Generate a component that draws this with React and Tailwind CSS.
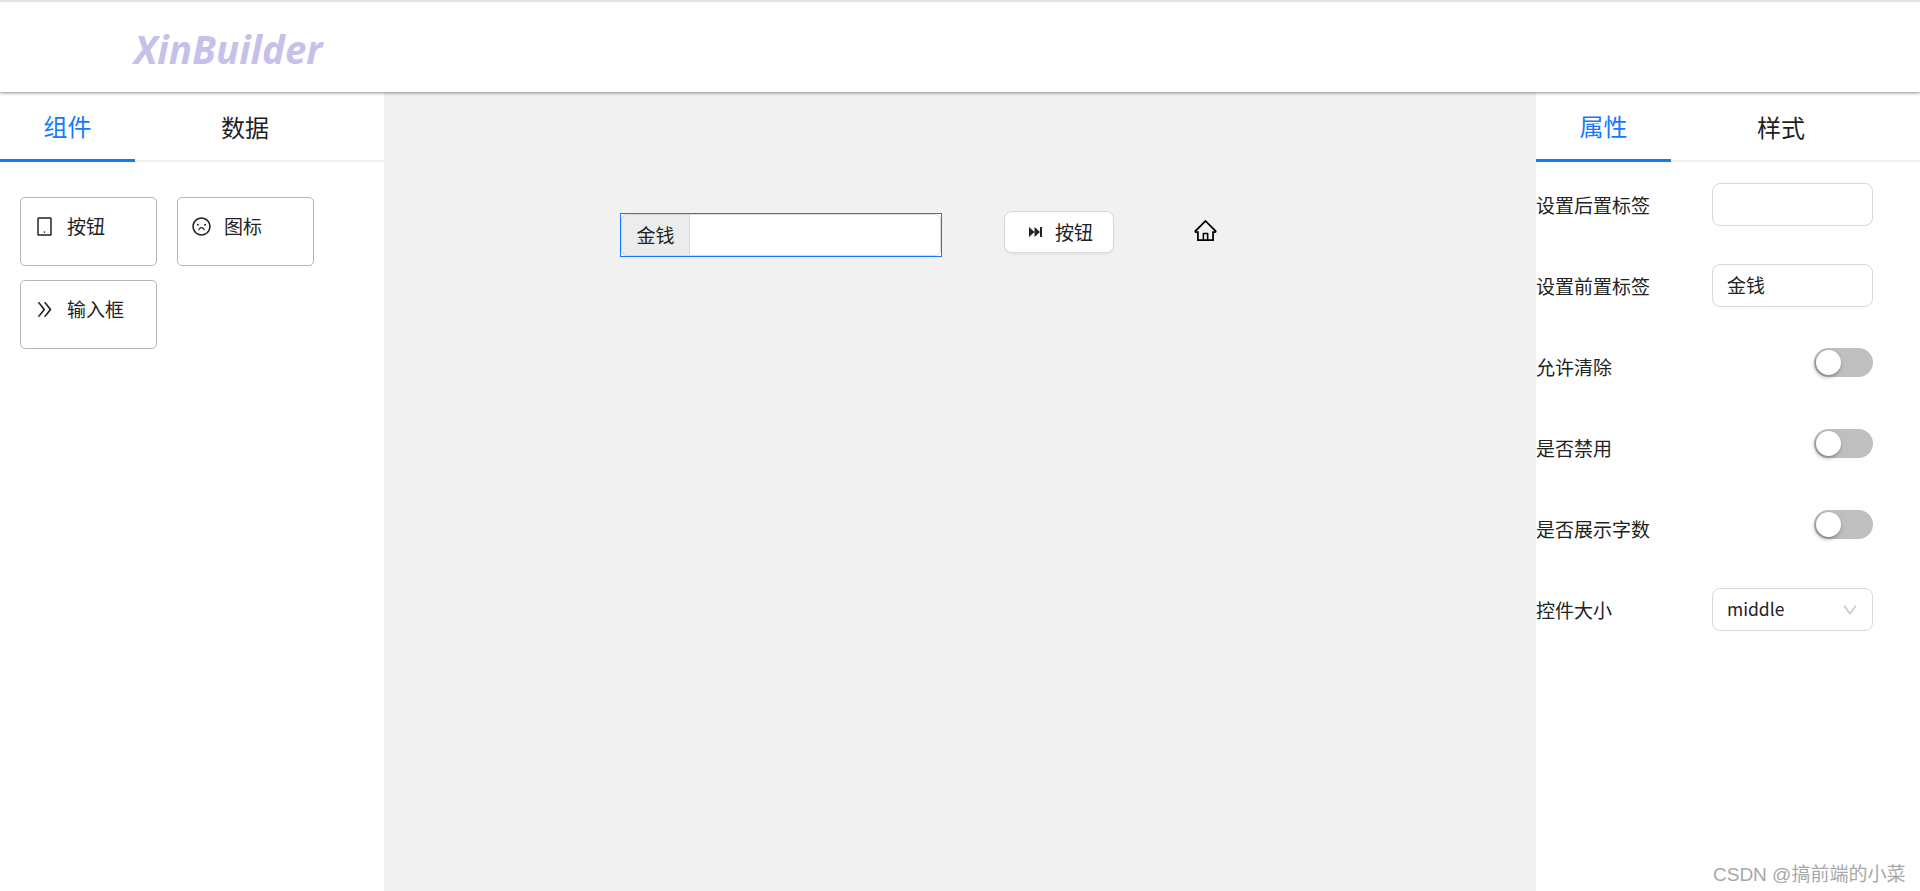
import React from "react";
import { AiOutlineTablet, AiOutlineFrown, AiOutlineDoubleRight, AiOutlineHome, AiOutlineDown } from "react-icons/ai";

const font = "font-['Noto_Sans_CJK_SC','Noto_Sans',sans-serif]";

function Tabs({ a, b }) {
  return (
    <div className="flex h-[70px] border-b-2 border-[#f0f0f0] text-[24px] leading-[36px] text-[#1f1f1f]">
      <div className="-mb-[2px] flex h-[70px] w-[135px] items-center justify-center border-b-[3px] border-[#1677ff] pt-[1px] text-[#1677ff]">{a}</div>
      <div className="flex h-[68px] w-[222px] items-center justify-center pt-[2px] pr-[2px]">{b}</div>
    </div>
  );
}

function Card({ icon, label }) {
  return (
    <div className="flex h-[69px] w-[137px] items-start gap-[12px] rounded-[5px] border border-[#b8b4b4] pl-[13px] pt-[14px] text-[19px] leading-[28px] text-[#222]">
      <span className="mt-[4px] flex h-[20px] w-[21px] items-center justify-center text-[21px] text-[#222]">{icon}</span>
      <span>{label}</span>
    </div>
  );
}

function Field({ label, children }) {
  return (
    <div className="flex h-[43px] items-start justify-between pr-[47px]">
      <span className="pt-[8px] text-[19px] leading-[28px] text-[#222]">{label}</span>
      {children}
    </div>
  );
}

function TextBox({ value, right }) {
  return (
    <div className="flex h-[43px] w-[161px] items-center justify-between rounded-[8px] border border-[#d9d9d9] bg-white pl-[14px] pr-[13px] text-[19px] text-[#222]">
      <span className={right ? "text-[17.5px]" : ""}>{value}</span>
      {right}
    </div>
  );
}

function Toggle() {
  return (
    <div className="mt-[3px] flex h-[29px] w-[59px] items-center rounded-full bg-[#bfbfbf] pl-[2px]">
      <span className="h-[25px] w-[25px] rounded-full bg-white shadow-[-1px_2px_4px_rgba(0,0,0,0.35)]" />
    </div>
  );
}

export default function App() {
  return (
    <div className={`flex h-[891px] w-full flex-col overflow-hidden bg-white ${font}`}>
      <header className="relative z-10 h-[92px] border-t-2 border-[#e3e3e3] bg-white pl-[134px] shadow-[0_1px_3px_rgba(80,65,65,0.6)]">
        <div className="font-['Open_Sans',sans-serif] text-[38.5px] font-bold italic leading-[94px] text-[#c5c1e8]">XinBuilder</div>
      </header>
      <div className="flex flex-1">
        <aside className="w-[384px] bg-white">
          <Tabs a="组件" b="数据" />
          <div className="flex w-[320px] flex-wrap gap-x-[20px] gap-y-[14px] pl-[20px] pt-[35px]">
            <Card icon={<AiOutlineTablet />} label="按钮" />
            <Card icon={<AiOutlineFrown />} label="图标" />
            <Card icon={<AiOutlineDoubleRight />} label="输入框" />
          </div>
        </aside>
        <main className="flex flex-1 items-start bg-[#f1f1f1] pl-[236px] pt-[119px]">
          <div className="mt-[2px] flex h-[44px] w-[322px] border border-[#1677ff] bg-white">
            <div className="flex w-[68px] items-center justify-center rounded-l-[6px] border border-r-0 border-[#d9d9d9] bg-[#ececec] text-[19px] text-[#222]">金钱</div>
            <div className="flex-1 rounded-r-[6px] border border-[#d9d9d9] bg-white" />
          </div>
          <div className="ml-[62px] flex h-[42px] w-[110px] items-center gap-[13px] rounded-[8px] border border-[#d9d9d9] bg-white pl-[24px] text-[19px] text-[#222] shadow-[0_2px_2px_rgba(0,0,0,0.05)]">
            <svg width="13" height="10" viewBox="0 0 13 10" fill="#222"><path d="M0 0l5.5 5L0 10zM5.5 0L11 5l-5.5 5zM11 0h2v10h-2z" /></svg>
            <span>按钮</span>
          </div>
          <div className="ml-[79px] mt-[7px] text-[25px] text-black"><AiOutlineHome /></div>
        </main>
        <aside className="w-[384px] bg-white">
          <Tabs a="属性" b="样式" />
          <div className="flex flex-col gap-[38px] pt-[21px]">
            <Field label="设置后置标签"><TextBox value="" /></Field>
            <Field label="设置前置标签"><TextBox value="金钱" /></Field>
            <Field label="允许清除"><Toggle /></Field>
            <Field label="是否禁用"><Toggle /></Field>
            <Field label="是否展示字数"><Toggle /></Field>
            <Field label="控件大小"><TextBox value="middle" right={<AiOutlineDown className="text-[18px] text-[#c4c4c4]" />} /></Field>
          </div>
        </aside>
      </div>
      <div className="pointer-events-none absolute left-[1713px] top-[859px] z-20 text-[19px] leading-[28px] text-[#a8a8a8]">
        <span className="font-['Liberation_Sans',sans-serif]">CSDN @</span>搞前端的小菜
      </div>
    </div>
  );
}
